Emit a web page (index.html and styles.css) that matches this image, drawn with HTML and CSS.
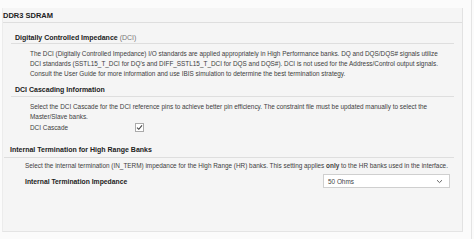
FILE: index.html
```html
<!DOCTYPE html>
<html lang="en">
<head>
    <meta charset="UTF-8">
    <title>DDR3 SDRAM</title>
    <link rel="stylesheet" href="styles.css">
</head>
<body>
    <main class="page">
        <div class="panel">
            <h2 class="title">DDR3 SDRAM</h2>

            <section class="group dci">
                <h3 class="group-head">Digitally Controlled Impedance <span class="muted">(DCI)</span></h3>
                <div class="group-body">
                    <p>The DCI (Digitally Controlled Impedance) I/O standards are applied appropriately in High Performance banks. DQ and DQS/DQS# signals utilize<br>
                    DCI standards (SSTL15_T_DCI for DQ's and DIFF_SSTL15_T_DCI for DQS and DQS#). DCI is not used for the Address/Control output signals.<br>
                    Consult the User Guide for more information and use IBIS simulation to determine the best termination strategy.</p>
                </div>
            </section>

            <section class="group cascade">
                <h3 class="group-head">DCI Cascading Information</h3>
                <div class="group-body">
                    <p>Select the DCI Cascade for the DCI reference pins to achieve better pin efficiency. The constraint file must be updated manually to select the<br>
                    Master/Slave banks.</p>
                    <div class="row check-row">
                        <label for="dciCascade" class="row-label">DCI Cascade</label>
                        <span class="check" id="dciCascade">
                            <svg width="7" height="7" viewBox="0 0 7 7"><path d="M1 3.6 L2.8 5.3 L6 1.4" fill="none" stroke="#444" stroke-width="1.1"/></svg>
                        </span>
                    </div>
                </div>
            </section>

            <section class="group hr">
                <h3 class="group-head">Internal Termination for High Range Banks</h3>
                <div class="group-body">
                    <p>Select the internal termination (IN_TERM) impedance for the High Range (HR) banks. This setting applies <b>only</b> to the HR banks used in the interface.</p>
                    <div class="row">
                        <label class="row-label strong">Internal Termination Impedance</label>
                        <div class="select">
                            <span>50 Ohms</span>
                            <svg width="7" height="5" viewBox="0 0 7 5"><path d="M1 1.2 L3.5 3.6 L6 1.2" fill="none" stroke="#666" stroke-width="1"/></svg>
                        </div>
                    </div>
                </div>
            </section>
        </div>
    </main>
</body>
</html>
```

FILE: styles.css
```css
* {
    box-sizing: border-box;
}

body {
    margin: 0;
    background-color: #fbfbfb;
    font-family: "Liberation Sans", Arial, sans-serif;
    font-size: 6.4px;
    color: #404040;
}

.page {
    width: 472px;
    height: 239px;
    padding: 8px 0 0 2px;
    border-right: 1px solid #e4e4e4;
}

.panel {
    height: 224px;
    background-color: #f5f5f5;
    border-left: 1px solid #ececec;
    border-right: 1px solid #e2e2e2;
    border-bottom: 1px solid #e4e4e4;
    margin-right: 8px;
}

.title {
    margin: 0;
    padding: 3px 0 2px 0;
    line-height: 9px;
    font-size: 7.5px;
    font-weight: bold;
    color: #222;
    border-bottom: 1px solid #dedede;
}

.group {
    margin: 0 8px;
}

.group-head {
    margin: 0;
    line-height: 9px;
    padding-left: 4px;
    font-size: 7px;
    font-weight: bold;
    color: #222;
    border-bottom: 1px solid #dedede;
}

.dci .group-head {
    padding-top: 10px;
    padding-bottom: 1px;
}

.cascade .group-head {
    padding-top: 6px;
    padding-bottom: 2px;
}

.muted {
    font-weight: normal;
    color: #777;
}

.group-body {
    padding: 5px 0 0 19px;
}

.group-body p {
    margin: 0;
    line-height: 10px;
    white-space: nowrap;
}

.row {
    display: flex;
    align-items: center;
    height: 14px;
    margin-top: 3px;
}

.check-row {
    height: 10px;
    margin-top: 0;
}

.row-label {
    width: 105px;
}

.row-label.strong {
    width: 298px;
    font-size: 6.8px;
    font-weight: bold;
    color: #222;
}

.check {
    display: flex;
    align-items: center;
    justify-content: center;
    width: 9px;
    height: 9px;
    border: 1px solid #aaa;
    background-color: #fff;
}

.group.hr {
    margin-left: 1px;
}

.hr .group-head {
    padding: 13px 0 3px 6px;
}

.hr .group-body {
    padding: 3px 0 0 21px;
}

.select {
    display: flex;
    align-items: center;
    justify-content: space-between;
    width: 127px;
    height: 14px;
    padding: 0 6px 0 4px;
    background-color: #fff;
    border: 1px solid #cfcfcf;
    color: #444;
}
```
